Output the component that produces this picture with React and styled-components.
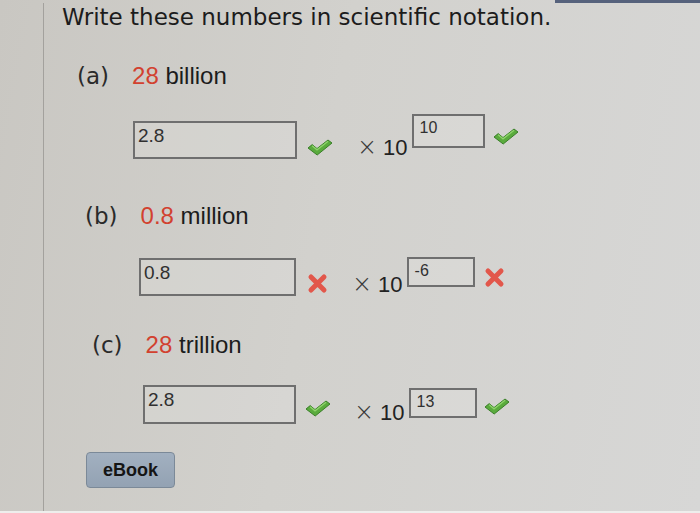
import React from 'react';
import styled, { createGlobalStyle } from 'styled-components';

const GlobalStyle = createGlobalStyle`
  html, body {
    margin: 0;
    padding: 0;
    background: #d2d1cd;
  }
`;

const questions = [
  {
    letter: '(a)', amount: '28', unit: 'billion',
    mantissa: '2.8', exponent: '10', mantissaOk: true, exponentOk: true,
    indent: 15, labelGap: 31, rowGap: 24,
    boxLeft: 71, boxWidth: 164, boxHeight: 38,
    markGap: 10, markDrop: 3, timesGap: 24,
    expWidth: 73, expHeight: 34, expDrop: 11, mark2Gap: 8, mark2Drop: 14,
  },
  {
    letter: '(b)', amount: '0.8', unit: 'million',
    mantissa: '0.8', exponent: '-6', mantissaOk: false, exponentOk: false,
    indent: 23, labelGap: 43, rowGap: 27,
    boxLeft: 77, boxWidth: 157, boxHeight: 38,
    markGap: 11, markDrop: 2, timesGap: 24,
    expWidth: 68, expHeight: 30, expDrop: 9, mark2Gap: 9, mark2Drop: 8,
  },
  {
    letter: '(c)', amount: '28', unit: 'trillion',
    mantissa: '2.8', exponent: '13', mantissaOk: true, exponentOk: true,
    indent: 30, labelGap: 35, rowGap: 26,
    boxLeft: 81, boxWidth: 153, boxHeight: 39,
    markGap: 9, markDrop: 7, timesGap: 23,
    expWidth: 68, expHeight: 30, expDrop: 6, mark2Gap: 7, mark2Drop: 9,
  },
];

function CheckMark() {
  return (
    <svg width="26" height="17" viewBox="0 0 26 17">
      <path
        d="M1 9 L5.2 5.6 L10 9.6 L21 1 L25 4 L10.2 16 Z"
        fill="#5aab3d"
        stroke="#3a7f29"
        strokeWidth="1"
        strokeLinejoin="round"
      />
      <path d="M5.2 6.8 L10 10.8 L21.1 2.2" fill="none" stroke="#8fd36c" strokeWidth="1.3" />
    </svg>
  );
}

function CrossMark() {
  return (
    <svg width="21" height="21" viewBox="0 0 21 21">
      <path d="M4 4 L17 17 M17 4 L4 17" stroke="#e2574b" strokeWidth="5" strokeLinecap="round" />
    </svg>
  );
}

function App() {
  return (
    <>
      <GlobalStyle />
      <Screen>
        <TopEdge>
          <BlueStrip />
        </TopEdge>
        <Panel>
          <Title>Write these numbers in scientific notation.</Title>
          {questions.map((q) => (
            <Question key={q.letter}>
              <Label $indent={q.indent} $gap={q.labelGap}>
                <Letter>{q.letter}</Letter>
                <Amount>{q.amount}</Amount> {q.unit}
              </Label>
              <AnswerRow $left={q.boxLeft} $gap={q.rowGap}>
                <Field $width={q.boxWidth} $height={q.boxHeight}>{q.mantissa}</Field>
                <Mark $gap={q.markGap} $drop={q.markDrop}>
                  {q.mantissaOk ? <CheckMark /> : <CrossMark />}
                </Mark>
                <Times $gap={q.timesGap}>
                  <Sign>×</Sign>10
                </Times>
                <Exponent $width={q.expWidth} $height={q.expHeight} $drop={q.expDrop}>
                  {q.exponent}
                </Exponent>
                <Mark $gap={q.mark2Gap} $drop={q.mark2Drop}>
                  {q.exponentOk ? <CheckMark /> : <CrossMark />}
                </Mark>
              </AnswerRow>
            </Question>
          ))}
          <EBookButton>eBook</EBookButton>
        </Panel>
        <BottomEdge />
      </Screen>
    </>
  );
}

const Screen = styled.div`
  width: 700px;
  height: 513px;
  overflow: hidden;
  display: flex;
  flex-direction: column;
  background: linear-gradient(100deg, #c9c7c2 0%, #d2d1cd 45%, #d7d7d6 100%);
`;

const TopEdge = styled.div`
  height: 3px;
  display: flex;
  justify-content: flex-end;
`;

const BlueStrip = styled.div`
  width: 145px;
  height: 3px;
  background: #56627c;
`;

const Panel = styled.div`
  flex: 1;
  margin-left: 43px;
  border-left: 1px solid #a3a19d;
  padding-left: 18px;
  display: flex;
  flex-direction: column;
  align-items: flex-start;
`;

const Title = styled.div`
  font-family: "DejaVu Sans", Verdana, sans-serif;
  font-size: 23px;
  line-height: 28px;
  color: #1c1c1c;
  white-space: nowrap;
`;

const Question = styled.div`
  display: flex;
  flex-direction: column;
`;

const Label = styled.div`
  margin-top: ${(p) => p.$gap}px;
  margin-left: ${(p) => p.$indent}px;
  font-family: "Liberation Sans", Arial, sans-serif;
  font-size: 24px;
  line-height: 28px;
  color: #1c1c1c;
  white-space: nowrap;
`;

const Letter = styled.span`
  font-family: "DejaVu Sans", Verdana, sans-serif;
  font-size: 23px;
  color: #2a2a2a;
  margin-right: 23px;
`;

const Amount = styled.span`
  color: #d2412f;
`;

const AnswerRow = styled.div`
  margin-top: ${(p) => p.$gap}px;
  padding-left: ${(p) => p.$left}px;
  display: flex;
  align-items: flex-end;
`;

const Field = styled.div`
  box-sizing: border-box;
  width: ${(p) => p.$width}px;
  height: ${(p) => p.$height}px;
  border: 2px solid #6f6f6f;
  background: rgba(255, 255, 255, 0.12);
  padding: 2px 0 0 3px;
  font-family: "Liberation Sans", Arial, sans-serif;
  font-size: 19px;
  line-height: 22px;
  color: #303030;
`;

const Exponent = styled(Field)`
  margin-bottom: ${(p) => p.$drop}px;
  padding: 3px 0 0 6px;
  font-size: 16px;
  line-height: 18px;
`;

const Mark = styled.div`
  display: flex;
  margin-left: ${(p) => p.$gap}px;
  margin-bottom: ${(p) => p.$drop}px;
`;

const Times = styled.div`
  margin-left: ${(p) => p.$gap}px;
  margin-right: 4px;
  font-family: "Liberation Sans", Arial, sans-serif;
  font-size: 22px;
  line-height: 22px;
  color: #222;
  white-space: nowrap;
`;

const Sign = styled.span`
  font-family: "DejaVu Sans", sans-serif;
  font-weight: 300;
  font-size: 24px;
  line-height: 0;
  color: #3a3a3a;
  margin-right: 6px;
`;

const EBookButton = styled.button`
  margin-top: 28px;
  margin-left: 24px;
  width: 89px;
  height: 36px;
  border: 1px solid #7b8998;
  border-radius: 4px;
  background: linear-gradient(#a2b0c0, #93a2b3);
  font-family: "Liberation Sans", Arial, sans-serif;
  font-weight: 700;
  font-size: 18px;
  color: #151515;
  padding: 0;
`;

const BottomEdge = styled.div`
  height: 2px;
  background: #eeeeec;
`;

export default App;
